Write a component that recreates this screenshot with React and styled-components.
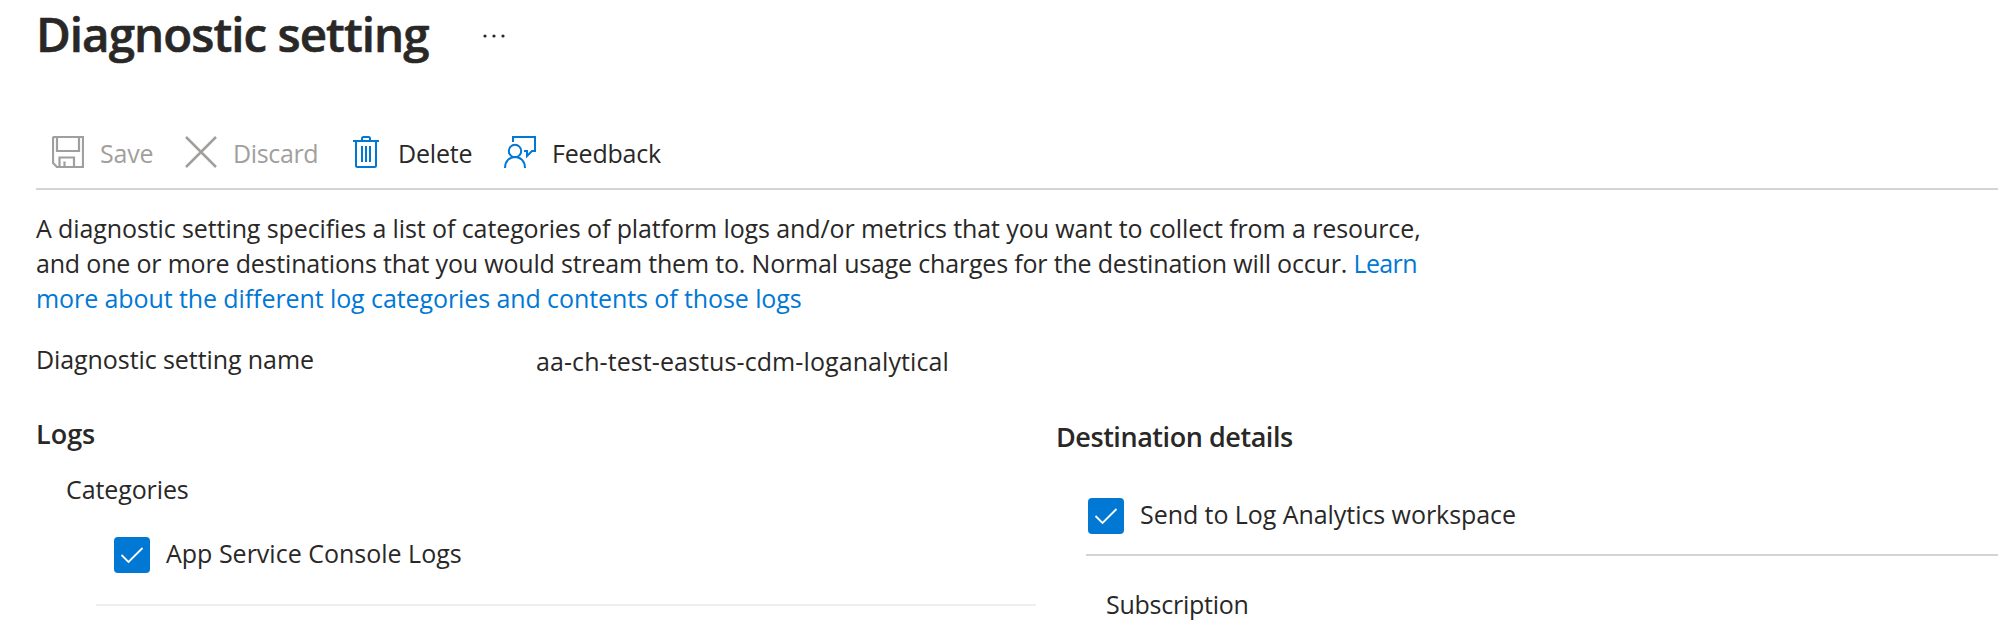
import React from "react";
import styled, { createGlobalStyle } from "styled-components";

const GlobalStyle = createGlobalStyle`
    body {
        margin: 0;
        background: #fff;
        color: #292827;
        font-family: "Open Sans", "Noto Sans", sans-serif;
        font-size: 25px;
        line-height: 35px;
    }
`;

const Page = styled.div`
    height: 622px;
    padding-left: 36px;
    box-sizing: border-box;
    overflow: hidden;
`;

const Header = styled.header`
    display: flex;
    height: 116px;
`;

const Title = styled.h1`
    width: 447px;
    margin: 2px 0 0 0;
    font-size: 47.5px;
    line-height: 64px;
    font-weight: 600;
    letter-spacing: -0.97px;
    white-space: nowrap;
    -webkit-text-stroke: 0.6px #292827;
`;

const MoreButton = styled.button`
    width: 24px;
    height: 72px;
    padding: 0;
    border: none;
    background: none;
`;

const Toolbar = styled.div`
    display: flex;
    align-items: center;
    height: 72px;
    padding-left: 16px;
    border-bottom: 2px solid #d4d4d4;
`;

const ToolbarButton = styled.button`
    display: flex;
    align-items: center;
    width: ${(props) => props.$width}px;
    padding: 0;
    border: none;
    background: none;
    color: ${(props) => (props.disabled ? "#a19f9d" : "#292827")};
    font: inherit;
    letter-spacing: ${(props) => props.$track}px;
    white-space: nowrap;
`;

const ToolbarLabel = styled.span`
    padding: 2px 0 0 ${(props) => props.$gap}px;
`;

const Icon = styled.svg`
    display: block;
    flex: none;
    fill: none;
    stroke: ${(props) => props.$color};
    stroke-width: ${(props) => props.$stroke || 2};
`;

const Description = styled.div`
    margin-top: 21px;
`;

const Line = styled.div`
    letter-spacing: ${(props) => props.$track}px;
    white-space: nowrap;
`;

const Link = styled.a`
    color: #0078d4;
    letter-spacing: ${(props) => props.$track}px;
    text-decoration: none;
`;

const NameRow = styled.div`
    display: flex;
    height: 74px;
    padding-top: 26px;
`;

const NameLabel = styled.label`
    width: 500px;
    letter-spacing: -0.08px;
`;

const NameValue = styled.div`
    padding-top: 2px;
    letter-spacing: 0.09px;
`;

const Columns = styled.div`
    display: flex;
`;

const LogsColumn = styled.section`
    width: 1000px;
    margin-right: 20px;
`;

const DestinationColumn = styled.section`
    flex: 1;
    padding-top: 3px;
`;

const SectionTitle = styled.h2`
    margin: 0;
    font-size: 27px;
    line-height: 35px;
    font-weight: 600;
    letter-spacing: ${(props) => props.$track}px;
`;

const Categories = styled.div`
    padding: 21px 0 0 30px;
    letter-spacing: -0.1px;
`;

const LogItem = styled.div`
    height: 68px;
    margin: 29px 0 0 60px;
    padding-left: 18px;
    border-bottom: 2px solid #efefef;
`;

const DestinationItem = styled.div`
    height: 57px;
    margin: 43px 0 0 30px;
    padding-left: 2px;
    border-bottom: 2px solid #d4d4d4;
`;

const CheckLabel = styled.div`
    display: flex;
    align-items: flex-start;
    letter-spacing: ${(props) => props.$track}px;
`;

const Checkbox = styled.span`
    width: 36px;
    height: 36px;
    margin: 1px 16px 0 0;
    border-radius: 4px;
    background: #0078d4;
`;

const Subscription = styled.div`
    padding: 31px 0 0 50px;
    letter-spacing: -0.25px;
`;

const SaveIcon = () => (
    <Icon width="32" height="32" $color="#a19f9d" $stroke={2.2}>
        <path d="M1 2.5Q1 1 2.5 1H31V31H5L1 27Z" />
        <path d="M5 1V15H27V1M7.5 31V21.5H22V31M12.5 25.5V31" />
    </Icon>
);

const DiscardIcon = () => (
    <Icon width="32" height="32" $color="#a19f9d" $stroke={2.5}>
        <path d="M1 1L31 31M31 1L1 31" />
    </Icon>
);

const DeleteIcon = () => (
    <Icon width="26" height="32" $color="#0078d4">
        <path d="M0 5H26M9 5V2.5Q9 1 10.5 1H15.5Q17 1 17 2.5V5M3 5V29.5Q3 31 4.5 31H21.5Q23 31 23 29.5V5M9 10V26M13 10V26M17 10V26" />
    </Icon>
);

const FeedbackIcon = () => (
    <Icon width="32" height="32" $color="#0078d4">
        <path d="M9 6V1H31V15H28L23 20V15H20" />
        <circle cx="11" cy="15" r="6.2" />
        <path d="M1 32C1 25 5.5 21 11 21S21 25 21 32" />
    </Icon>
);

const Check = () => (
    <Checkbox>
        <Icon width="36" height="36" $color="#fff" $stroke={1.8}>
            <path d="M7.5 18L14.5 25L28.5 11" />
        </Icon>
    </Checkbox>
);

class App extends React.Component {
    render() {
        return (
            <Page>
                <GlobalStyle />
                <Header>
                    <Title>Diagnostic setting</Title>
                    <MoreButton type="button" aria-label="More">
                        <svg width="24" height="72" fill="#292827">
                            <circle cx="2" cy="36" r="1.6" />
                            <circle cx="11" cy="36" r="1.6" />
                            <circle cx="20" cy="36" r="1.6" />
                        </svg>
                    </MoreButton>
                </Header>
                <Toolbar>
                    <ToolbarButton type="button" disabled $width={133} $track={-0.2}>
                        <SaveIcon />
                        <ToolbarLabel $gap={16}>Save</ToolbarLabel>
                    </ToolbarButton>
                    <ToolbarButton type="button" disabled $width={168} $track={-0.35}>
                        <DiscardIcon />
                        <ToolbarLabel $gap={16}>Discard</ToolbarLabel>
                    </ToolbarButton>
                    <ToolbarButton type="button" $width={151} $track={-0.2}>
                        <DeleteIcon />
                        <ToolbarLabel $gap={19}>Delete</ToolbarLabel>
                    </ToolbarButton>
                    <ToolbarButton type="button" $width={170} $track={-0.2}>
                        <FeedbackIcon />
                        <ToolbarLabel $gap={16}>Feedback</ToolbarLabel>
                    </ToolbarButton>
                </Toolbar>
                <Description>
                    <Line $track={-0.1}>A diagnostic setting specifies a list of categories of platform logs and/or metrics that you want to collect from a resource,</Line>
                    <Line $track={-0.185}>
                        and one or more destinations that you would stream them to. Normal usage charges for the destination will occur. <Link $track={-0.6}>Learn</Link>
                    </Line>
                    <Line $track={-0.088}><Link $track={-0.088}>more about the different log categories and contents of those logs</Link></Line>
                </Description>
                <NameRow>
                    <NameLabel>Diagnostic setting name</NameLabel>
                    <NameValue>aa-ch-test-eastus-cdm-loganalytical</NameValue>
                </NameRow>
                <Columns>
                    <LogsColumn>
                        <SectionTitle $track={0}>Logs</SectionTitle>
                        <Categories>Categories</Categories>
                        <LogItem>
                            <CheckLabel $track={0}>
                                <Check />
                                App Service Console Logs
                            </CheckLabel>
                        </LogItem>
                    </LogsColumn>
                    <DestinationColumn>
                        <SectionTitle $track={-0.45}>Destination details</SectionTitle>
                        <DestinationItem>
                            <CheckLabel $track={-0.06}>
                                <Check />
                                Send to Log Analytics workspace
                            </CheckLabel>
                        </DestinationItem>
                        <Subscription>Subscription</Subscription>
                    </DestinationColumn>
                </Columns>
            </Page>
        );
    }
}

export default App;
